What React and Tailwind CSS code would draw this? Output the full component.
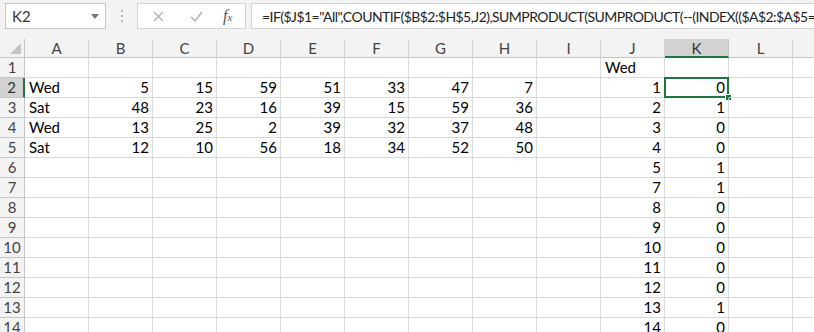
import React from 'react';

const COLS = ['A', 'B', 'C', 'D', 'E', 'F', 'G', 'H', 'I', 'J', 'K', 'L', 'M'];

// one entry per row: [A..H], J, K
const ROWS = [
  { n: 1, data: [], j: 'Wed', k: '' },
  { n: 2, data: ['Wed', 5, 15, 59, 51, 33, 47, 7], j: 1, k: 0 },
  { n: 3, data: ['Sat', 48, 23, 16, 39, 15, 59, 36], j: 2, k: 1 },
  { n: 4, data: ['Wed', 13, 25, 2, 39, 32, 37, 48], j: 3, k: 0 },
  { n: 5, data: ['Sat', 12, 10, 56, 18, 34, 52, 50], j: 4, k: 0 },
  { n: 6, data: [], j: 5, k: 1 },
  { n: 7, data: [], j: 7, k: 1 },
  { n: 8, data: [], j: 8, k: 0 },
  { n: 9, data: [], j: 9, k: 0 },
  { n: 10, data: [], j: 10, k: 0 },
  { n: 11, data: [], j: 11, k: 0 },
  { n: 12, data: [], j: 12, k: 0 },
  { n: 13, data: [], j: 13, k: 1 },
  { n: 14, data: [], j: 14, k: 0 },
];

const FORMULA =
  '=IF($J$1="All",COUNTIF($B$2:$H$5,J2),SUMPRODUCT(SUMPRODUCT(--(INDEX(($A$2:$A$5=$J$1)*$B$2:$H$5,0)=J2))))';

function FormulaBar() {
  return (
    <div className="h-[39px] bg-[#f3f3f3] flex items-start pt-[3px] pl-[5px]">
      {/* Name box */}
      <div className="w-[101px] h-[26px] bg-white border border-[#c6c6c6] flex items-center justify-between pl-[6px] pr-[6px]">
        <span className="text-[15px] text-[#333]">K2</span>
        <svg width="8" height="5" viewBox="0 0 8 5">
          <path d="M0 0 L8 0 L4 5 Z" fill="#777" />
        </svg>
      </div>
      {/* Grip dots */}
      <div className="w-[31px] h-[26px] flex flex-col items-center justify-center gap-[3px]">
        <div className="w-[2px] h-[2px] bg-[#b5b5b5]" />
        <div className="w-[2px] h-[2px] bg-[#b5b5b5]" />
        <div className="w-[2px] h-[2px] bg-[#b5b5b5]" />
      </div>
      {/* Cancel / Enter / fx */}
      <div className="w-[109px] h-[26px] bg-white border border-[#d4d4d4] flex items-center">
        <svg className="ml-[15px]" width="11" height="11" viewBox="0 0 11 11">
          <path d="M1 1 L10 10 M10 1 L1 10" stroke="#b0b0b0" strokeWidth="1.3" />
        </svg>
        <svg className="ml-[26px]" width="13" height="11" viewBox="0 0 13 11">
          <path d="M1 6 L5 10 L12 1" stroke="#b0b0b0" strokeWidth="1.5" fill="none" />
        </svg>
        <span className="ml-[20px] italic text-[16px] text-[#555] font-['Liberation_Serif',serif] leading-none">
          f<span className="text-[11px]">x</span>
        </span>
      </div>
      {/* Formula input */}
      <div className="ml-[5px] flex-1 h-[26px] bg-white border border-[#d4d4d4] border-r-0 flex items-center pl-[10px] overflow-hidden whitespace-nowrap">
        <span className="text-[14px] tracking-[-0.55px] text-[#222]">{FORMULA}</span>
      </div>
    </div>
  );
}

function HeaderRow() {
  return (
    <div className="flex h-[19px] bg-[#f3f3f3]">
      <div className="w-[25px] shrink-0 border-r border-b border-[#c6c6c6] relative">
        <svg className="absolute right-[3px] bottom-[3px]" width="11" height="11" viewBox="0 0 11 11">
          <path d="M11 0 L11 11 L0 11 Z" fill="#c4c4c4" />
        </svg>
      </div>
      {COLS.map((c) =>
        c === 'K' ? (
          <div
            key={c}
            className="w-16 shrink-0 bg-[#d2d2d2] border-r border-[#c6c6c6] border-b-2 border-b-[#217346] text-center text-[15px] leading-[18px] text-[#333]"
          >
            {c}
          </div>
        ) : (
          <div
            key={c}
            className="w-16 shrink-0 border-r border-b border-[#d4d4d4] border-b-[#c6c6c6] text-center text-[15px] leading-[18px] text-[#444]"
          >
            {c}
          </div>
        )
      )}
    </div>
  );
}

function Cell({ value, align, children }) {
  return (
    <div
      className={`w-16 shrink-0 relative border-r border-b border-[#dadada] px-[3px] text-[15px] leading-[19px] text-black whitespace-nowrap ${
        align === 'left' ? 'text-left pl-[4px]' : 'text-right'
      }`}
    >
      {value}
      {children}
    </div>
  );
}

function DataRow({ row }) {
  const active = row.n === 2;
  return (
    <div className="flex h-5">
      {active ? (
        <div className="w-[25px] shrink-0 bg-[#d2d2d2] border-r-2 border-[#217346] border-b border-b-[#c6c6c6] text-center text-[15px] leading-[19px] text-[#333]">
          {row.n}
        </div>
      ) : (
        <div className="w-[25px] shrink-0 bg-[#f3f3f3] border-r border-b border-[#c6c6c6] text-center text-[15px] leading-[19px] text-[#444]">
          {row.n}
        </div>
      )}
      {COLS.map((c, i) => {
        if (i < 8) {
          return <Cell key={c} value={row.data[i] ?? ''} align={i === 0 ? 'left' : 'right'} />;
        }
        if (c === 'J') {
          return <Cell key={c} value={row.j} align={row.n === 1 ? 'left' : 'right'} />;
        }
        if (c === 'K') {
          return (
            <Cell key={c} value={row.k} align="right">
              {active && (
                <>
                  <div className="absolute -left-px -top-px -right-px -bottom-px border-2 border-[#217346]" />
                  <div className="absolute -right-[4px] -bottom-[4px] w-[7px] h-[7px] bg-[#217346] border border-white" />
                </>
              )}
            </Cell>
          );
        }
        return <Cell key={c} value="" />;
      })}
    </div>
  );
}

export default function App() {
  return (
    <div className="w-[814px] h-[332px] overflow-hidden bg-white font-['Lato',sans-serif]">
      <FormulaBar />
      <HeaderRow />
      {ROWS.map((r) => (
        <DataRow key={r.n} row={r} />
      ))}
    </div>
  );
}
